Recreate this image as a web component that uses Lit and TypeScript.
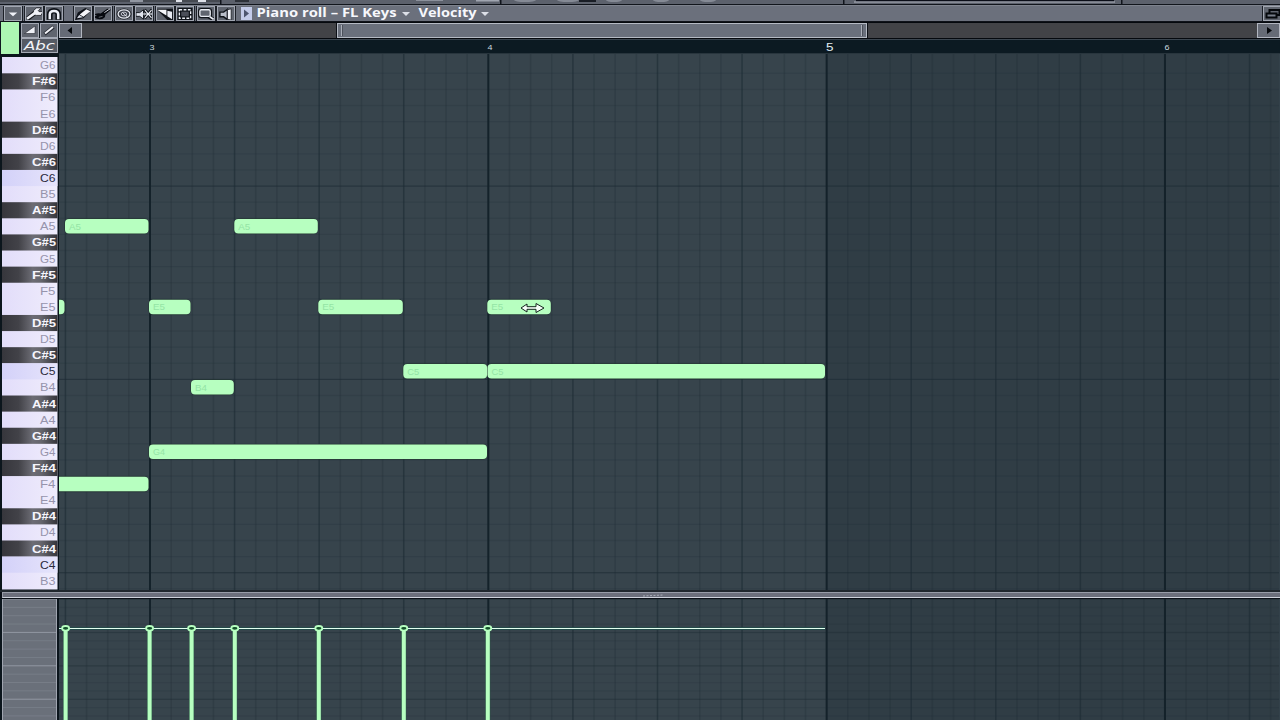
import { LitElement, html, svg, css } from "lit";
import { customElement } from "lit/decorators.js";

const ROW = 16.11;
const TOP = 57.2 - 54;
const STEP = 21.145;
const BAR3 = 92;
const NAMES = ["C", "C#", "D", "D#", "E", "F", "F#", "G", "G#", "A", "A#", "B"];
const KEYS = Array.from({ length: 33 }, (_, i) => {
  const n = 79 - i;
  return { name: NAMES[n % 12] + Math.floor(n / 12), i };
});

const NOTES = [
  { x: 65, w: 84, y: 226.3, t: "A5" },
  { x: 234.3, w: 84, y: 226.3, t: "A5" },
  { x: 50, w: 15, y: 307, t: "" },
  { x: 149, w: 42, y: 307, t: "E5" },
  { x: 318.3, w: 85, y: 307, t: "E5" },
  { x: 487.3, w: 64, y: 307, t: "E5" },
  { x: 403.3, w: 84.3, y: 371.3, t: "C5" },
  { x: 487.5, w: 338, y: 371.3, t: "C5" },
  { x: 191, w: 43.3, y: 387.3, t: "B4" },
  { x: 149, w: 338.5, y: 451.8, t: "G4" },
  { x: 50, w: 99, y: 484, t: "" },
];
const VELS = [65.6, 149.6, 191.6, 234.8, 318.8, 403.8, 487.8];

const label = (t: string, x: number, y: number, len: number, size: number, fill: string, weight = 400, style = "normal") =>
  svg`<text x=${x} y=${y} font-size=${size} fill=${fill} font-weight=${weight} font-style=${style} textLength=${len} lengthAdjust="spacingAndGlyphs">${t}</text>`;

const columns = (h: number) =>
  Array.from({ length: 61 }, (_, i) => i - 4).map((i) => {
    const x = BAR3 + i * STEP;
    const bar = i % 16 === 0;
    const beat = i % 4 === 0;
    return svg`<rect x=${x - (bar ? 1 : 0.75)} y="0" width=${bar ? 2 : 1.5} height=${h} fill=${bar ? "#14222a" : "#1c2b33"} opacity=${bar ? 1 : beat ? 0.6 : 0.24}></rect>`;
  });

const icons = {
  menu: svg`<path d="M5 7h9l-4.500 4z" fill="#f0f2f8"/>`,
  wrench: svg`<path d="M2 14L10 7.500" stroke="#14171c" stroke-width="5"/><path d="M9 5l3-3h5l-3 3 1 1h4l-2 4h-5L9 9z" fill="#f0f2f8" stroke="#14171c" stroke-width=".8"/><path d="M2 13.500L11 7" stroke="#f0f2f8" stroke-width="2.800"/>`,
  magnet: svg`<path d="M5 14.500V9q0-4 4.500-4T14 9v5.500" fill="none" stroke="#0c1016" stroke-width="6"/><path d="M5 14V9q0-3.700 4.500-3.700T14 9v5" fill="none" stroke="#eef1f8" stroke-width="2.700"/>`,
  pencil: svg`<path d="M1 15l3-8 8-5 6 3-8 8z" fill="#0d1118"/><path d="M6 9l7-5.500 4.500 2L10 11.500z" fill="#f4f5f9"/><path d="M3 13l2.500-3.500L9.500 12z" fill="#d4d8e2"/>`,
  brush: svg`<path d="M0 9q4-2 7-1l7-5 4 1-6 5q0 5-6 5-5 0-6-3 2 0 3-1z" fill="#06090f"/><path d="M11 7l6-4" stroke="#d8dbe4" stroke-width="1"/><path d="M5 12l4-1" stroke="#6b7078" stroke-width="1"/>`,
  mute: svg`<ellipse cx="9.500" cy="8.500" rx="8" ry="5.800" fill="#0f1319"/><ellipse cx="9.500" cy="8.500" rx="6.300" ry="4.400" fill="#3a3e47" stroke="#e5e8ef" stroke-width="1.400"/><ellipse cx="9.500" cy="8.500" rx="3" ry="2" fill="none" stroke="#c5c9d2" stroke-width="1"/><path d="M8 7l5 4.500" stroke="#e5e8ef"/>`,
  cut: svg`<path d="M1 7h4l4-3v10l-4-3H1z" fill="#dfe3ec" stroke="#11151b"/><path d="M10 4l8 9M18 4l-8 9" stroke="#0f1319" stroke-width="3.500"/><path d="M10.500 4.500l7 8M17.500 4.500l-7 8M8 8.500h10" stroke="#eceff6" stroke-width="1.200"/>`,
  slice: svg`<path d="M0 3h18v12H12z" fill="#0f1319"/><path d="M1 4h10v6z" fill="#f4f6fa"/><path d="M12 5l5 1v8l-5-3z" fill="#e8ebf3"/>`,
  select: svg`<rect x="3.500" y="4" width="12" height="9" fill="#4b4f59" stroke="#0f1319" stroke-width="4"/><rect x="3.500" y="4" width="12" height="9" fill="none" stroke="#eceff6" stroke-width="1.400" stroke-dasharray="3 1.500"/>`,
  zoom: svg`<path d="M12 11l5 3" stroke="#0f1319" stroke-width="4"/><rect x="3" y="4" width="11" height="7" rx="1.500" fill="#60656f" stroke="#0f1319" stroke-width="4"/><rect x="3" y="4" width="11" height="7" rx="1.500" fill="#60656f" stroke="#e8ebf2" stroke-width="1.400"/><path d="M13.500 11.500l4 2.500" stroke="#e8ebf2" stroke-width="1.800"/>`,
  speaker: svg`<path d="M3 6.500h4l4-3v11l-4-3H3z" fill="#b9bec9" stroke="#0f1319" stroke-width="1.500"/><path d="M11 4l4-1v12l-4-1z" fill="#eef0f6" stroke="#0f1319" stroke-width=".8"/>`,
  ramp: svg`<path d="M2.500 10.500L13 3v7.500z" fill="#eef0f6" stroke="#23272f" stroke-width=".6"/>`,
  line: svg`<path d="M3.500 11L12.500 4" stroke="#23272f" stroke-width="3.500"/><path d="M4 10.500L12 4" stroke="#f2f3f8" stroke-width="2"/>`,
  left: svg`<path d="M12 4v7L7.500 7.500z" fill="#05080c"/>`,
  right: svg`<path d="M9 4v7l5-3.500z" fill="#05080c"/>`,
  win: svg`<rect x="6.500" y="4" width="10" height="5" fill="none" stroke="#05080c" stroke-width="2"/><rect x="3.500" y="7.500" width="10" height="4" fill="#777d89" stroke="#05080c" stroke-width="2"/>`,
};

@customElement("app-root")
export class AppRoot extends LitElement {
  static styles = css`
    :host { display: block; width: 1280px; height: 720px; overflow: hidden; background: #33414a; }
    svg { display: block; flex: none; font-family: "Liberation Sans", Arial, sans-serif; }
    .app { display: flex; flex-direction: column; height: 720px; }
    .strip { height: 5px; flex: none; }
    .bar { display: flex; height: 17px; flex: none; box-sizing: border-box; background: #6b707c; border-top: 1px solid #7d828d; border-bottom: 1px solid #10131a; padding-left: 4px; align-items: center; }
    .title { font-family: "Open Sans", "Noto Sans", sans-serif; overflow: visible; margin-left: -1px; }
    .btn { width: 18px; height: 15px; margin-right: 2.500px; box-sizing: border-box; border: 1px solid #a1a6b1; background: #60656f; box-shadow: 1px 0 0 #1c2027, -1px 0 0 #1c2027; overflow: hidden; flex: none; }
    .btn svg { margin: -1px 0 0 -1px; }
    .win { margin-right: -1px; }
    .gap { width: 8px; flex: none; }
    .grow { flex: 1; }
    .mid { display: flex; height: 32px; flex: none; }
    .corner { width: 59px; flex: none; display: flex; box-sizing: border-box; padding-left: 1px; background: #101820; }
    .green { width: 18px; flex: none; background: #adf6b3; margin-right: 2px; }
    .tools { flex: 1; min-width: 0; display: flex; flex-direction: column; padding-top: 1px; }
    .pair { display: flex; height: 15px; }
    .sq { flex: 1; min-width: 0; box-sizing: border-box; border: 1px solid #a4a9b4; background: #60656f; overflow: hidden; margin-right: 1px; }
    .sq svg { margin-top: -1px; }
    .abc { height: 15px; box-sizing: border-box; border: 1px solid #a4a9b4; background: #555a64; margin: 0 1px 1px 0; }
    .abc svg { font-family: "DejaVu Sans", sans-serif; overflow: visible; }
    .right { flex: 1; min-width: 0; }
    .scroll { display: flex; height: 17px; box-sizing: border-box; border-top: 1px solid #05090e; border-bottom: 1px solid #05090e; background: #424347; }
    .arrow { width: 23px; box-sizing: border-box; border: 1px solid #b2b6c0; background: #666b76; flex: none; }
    .thumb { width: 530px; margin-left: 255px; box-sizing: border-box; border: 1px solid #b5bac4; box-shadow: -1px 0 0 #0b0f15, 1px 0 0 #0b0f15; background: #6a707c; display: flex; justify-content: space-between; padding: 1px 3px; flex: none; }
    .grip { width: 1px; background: #a9aeb9; border-right: 1px solid #4c515b; }
    .ruler { height: 15px; box-sizing: border-box; border-top: 1px solid #3b4650; border-bottom: 1px solid #28353d; background: #0c1a22; }
    .body { display: flex; height: 536px; flex: none; }
    .keys { width: 59px; flex: none; background: #0b151c; }
    .split { height: 9px; flex: none; box-sizing: border-box; border-top: 2px solid #20272e; padding-left: 2px; background: #0a0f17; }
    .bevel { height: 6px; box-sizing: border-box; border-top: 1px solid #989ca8; border-bottom: 1px solid #ced2dc; border-left: 1px solid #989ca8; background: #6c6f7c; display: flex; justify-content: center; align-items: center; padding-left: 22px; }
    .vel { display: flex; height: 121px; }
  `;

  private button(icon: unknown) {
    return html`<div class="btn"><svg width="18" height="16" viewBox="0 0 19 17">${icon}</svg></div>`;
  }

  private keys() {
    return svg`
      <defs>
        <linearGradient id="bk"><stop offset="0" stop-color="#36363c"/><stop offset=".3" stop-color="#424248"/><stop offset=".55" stop-color="#6c6c74"/><stop offset=".7" stop-color="#66666d"/><stop offset="1" stop-color="#34343a"/></linearGradient>
        <linearGradient id="wk"><stop offset="0" stop-color="#e2ddfa"/><stop offset="1" stop-color="#efecfc"/></linearGradient>
        <linearGradient id="ck"><stop offset="0" stop-color="#d3d1f9"/><stop offset="1" stop-color="#e6e4fb"/></linearGradient>
      </defs>
      <rect x="2" y="3" width="55.500" height="532.500" fill="url(#wk)"/>
      ${KEYS.map(({ name, i }) => {
        const y = TOP + i * ROW;
        const black = name.includes("#");
        const c = name[0] === "C" && !black;
        return svg`
          ${black ? svg`<rect x="2" y=${y} width="55.500" height=${ROW} fill="url(#bk)"/>` : c ? svg`<rect x="2" y=${y} width="55.500" height=${ROW} fill="url(#ck)"/>` : null}
          ${black ? label(name, 32, y + 12, 24, 11, "#f6f5fc", 700) : label(name, 40, y + 12, 15.5, 10.8, c ? "#2a2a3c" : "#9694ac")}`;
      })}`;
  }

  private grid() {
    return svg`
      <rect width="1221" height="536" fill="#37444c"/>
      <rect x="768" width="453" height="536" fill="#303d45"/>
      ${KEYS.map(({ name, i }) => svg`<rect x="0" y=${TOP + (i + 1) * ROW - 0.6} width="1221" height="1.200" fill="#1f2d35" opacity=${name.startsWith("C") && !name.includes("#") ? 0.65 : 0.2}/>`)}
      ${columns(536)}
      ${NOTES.map((n) => svg`
        <rect x=${n.x - 58.5} y=${n.y - 61.8} width=${n.w + 0.5} height="15.500" rx="4.500" fill="#22362f"/>
        <rect x=${n.x - 58} y=${n.y - 61.3} width=${n.w - 0.5} height="14.500" rx="4" fill="#b7ffc0"/>
        ${n.t ? label(n.t, n.x - 54, n.y - 50.8, 12, 8.5, "#94e4a5") : null}`)}
      <path d="M463 254l6-4v2.700h9V249.500l8 4.500-8 4.500v-3.200h-9v2.700z" fill="#f6fff8" stroke="#12251c" stroke-width="1"/>`;
  }

  private velocity() {
    return svg`
      <rect width="1221" height="121" fill="#37444c"/>
      <rect x="768" width="453" height="121" fill="#303d45"/>
      ${Array.from({ length: 17 }, (_, i) => svg`<rect y=${-0.5 + i * 8.35} width="1221" height="1.200" fill="#1f2d35" opacity=${i % 4 === 0 ? 0.5 : 0.18}/>`)}
      ${columns(121)}
      <rect x="1" y="28" width="766" height="3" fill="#244b49"/>
      <rect x="1" y="29" width="766" height="1" fill="#e4fff0"/>
      ${VELS.map((x) => svg`
        <rect x=${x - 60.5} y="31" width="5" height="90" fill="#2c5b48"/>
        <rect x=${x - 60} y="31" width="4" height="90" fill="#b7ffc0"/>
        <ellipse cx=${x - 58} cy="29.300" rx="3.500" ry="2.300" fill="#14502a" stroke="#b7ffc0" stroke-width="1.800"/>`)}`;
  }

  render() {
    return html`
      <div class="app">
        <svg class="strip" width="1280" height="5">
          <rect width="1280" height="5" fill="#5c616c"/>
          <rect y="0" width="220" height="2" fill="#454951"/>
          <rect x="130" width="13" height="2" fill="#9297a2"/><rect x="176" width="6" height="2" fill="#dfe2ea"/><rect x="198" width="8" height="2" fill="#dfe2ea"/>
          <rect x="220" width="1.500" height="4" fill="#11151c"/><rect x="235" width="14" height="2" fill="#2d3139"/>
          <rect x="416" width="27" height="1" fill="#8c919c"/><rect x="476" width="23" height="1.500" fill="#a0a5b0"/>
          <rect x="500" width="1.500" height="4" fill="#11151c"/>
          <ellipse cx="525" cy="0" rx="11" ry="2" fill="#858a95"/><ellipse cx="568" cy="0" rx="11" ry="2" fill="#858a95"/><rect x="579" width="17" height="2" fill="#1a1e26"/><ellipse cx="614" cy="0" rx="8" ry="2" fill="#858a95"/><ellipse cx="661" cy="0" rx="8" ry="2" fill="#858a95"/><ellipse cx="708" cy="0" rx="8" ry="2" fill="#858a95"/>
          <rect x="843" width="1.500" height="4" fill="#11151c"/><rect x="856" width="258" height="1.500" fill="#0b0e18"/><rect x="854" y="1.500" width="261" height="1" fill="#b4b8c2"/>
          <rect x="1121" width="1.500" height="4" fill="#11151c"/>
          <rect y="4" width="1280" height="1" fill="#11151c"/>
        </svg>
        <div class="bar">
          ${[icons.menu, icons.wrench, icons.magnet].map((i) => this.button(i))}
          <div class="gap"></div>
          ${[icons.pencil, icons.brush, icons.mute, icons.cut, icons.slice, icons.select, icons.zoom, icons.speaker].map((i) => this.button(i))}
          <svg class="title" width="270" height="15">
            <rect x="4" y="1" width="11" height="13" fill="#c3cbe9"/><path d="M7 3.500v8l5-4z" fill="#4d556f"/>
            ${label("Piano roll – FL Keys", 19.5, 11, 140, 12, "#f7f8fc", 700)}
            <path d="M165 6h8l-4 4z" fill="#dde0e8"/>
            ${label("Velocity", 181.5, 11, 58, 12, "#f7f8fc", 700)}
            <path d="M244 6h8l-4 4z" fill="#dde0e8"/>
          </svg>
          <div class="grow"></div>
          <div class="btn win"><svg width="18" height="16">${icons.win}</svg></div>
        </div>
        <div class="mid">
          <div class="corner">
            <div class="green"></div>
            <div class="tools">
              <div class="pair">
                <div class="sq"><svg width="16" height="15">${icons.ramp}</svg></div>
                <div class="sq"><svg width="16" height="15">${icons.line}</svg></div>
              </div>
              <div class="abc"><svg width="34" height="13">${label("Abc", 2, 11, 31, 12, "#f2f3f8", 400, "italic")}</svg></div>
            </div>
          </div>
          <div class="right">
            <div class="scroll">
              <div class="arrow"><svg width="20" height="13"><g transform="translate(0,-1)">${icons.left}</g></svg></div>
              <div class="thumb"><div class="grip"></div><div class="grip"></div></div>
              <div class="grow"></div>
              <div class="arrow"><svg width="20" height="13"><g transform="translate(0,-1)">${icons.right}</g></svg></div>
            </div>
            <div class="ruler">
              <svg width="1221" height="13">
                ${label("3", 90.5, 9.5, 5, 8, "#c9d8df")}
                ${label("4", 428.5, 9.5, 5, 8, "#c9d8df")}
                ${label("5", 767, 11, 7.5, 10, "#e0edf2")}
                ${label("6", 1105.5, 9.5, 5, 8, "#c9d8df")}
              </svg>
            </div>
          </div>
        </div>
        <div class="body">
          <svg class="keys" width="59" height="536">${this.keys()}</svg>
          <svg width="1221" height="536" viewBox="1 0 1221 536">${this.grid()}</svg>
        </div>
        <div class="split"><div class="bevel">
          <svg width="22" height="4"><path d="M1 3l20-1" stroke="#a9adb8" stroke-dasharray="2 1.500"/></svg>
        </div></div>
        <div class="vel">
          <svg class="keys" width="59" height="121">
            <rect x="2" width="55" height="121" fill="#6a707a"/>
            ${Array.from({ length: 16 }, (_, i) => svg`<rect x="2" y=${-0.5 + i * 8.35} width="55" height="1" fill="#969ba6" opacity=${i % 4 === 0 ? 0.9 : 0.3}/>`)}
            <path d="M2.500 0V121M56.500 0V121" stroke="#a0a5b0"/>
          </svg>
          <svg width="1221" height="121" viewBox="1 0 1221 121">${this.velocity()}</svg>
        </div>
      </div>`;
  }
}
